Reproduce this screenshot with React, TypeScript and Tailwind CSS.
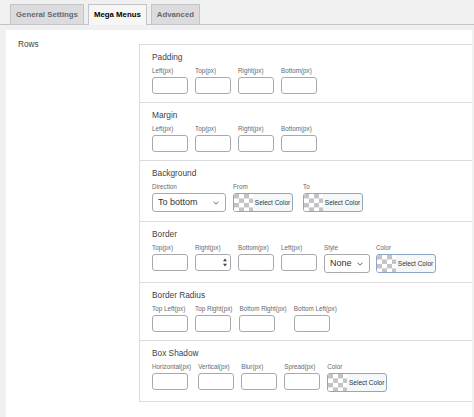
import React from "react";

function Checker() {
  return (
    <svg width="19" height="100%" viewBox="0 0 19 19" preserveAspectRatio="none" className="block h-full">
      <rect width="19" height="19" fill="#ffffff" />
      {[0, 1, 2, 3].map((r) =>
        [0, 1, 2, 3].map((c) =>
          (r + c) % 2 === 0 ? (
            <rect key={`${r}-${c}`} x={c * 5} y={r * 5} width="5" height="5" fill="#c3c4c7" />
          ) : null
        )
      )}
    </svg>
  );
}

function TextBox({ spinner = false }: { spinner?: boolean }) {
  return (
    <div className="relative w-[36px] h-[17px] border border-[#a7aaad] rounded-[3px] bg-white">
      {spinner && (
        <svg width="4" height="9" viewBox="0 0 4 9" className="absolute right-[3px] top-[3px]">
          <path d="M0 3.2 L2 0.6 L4 3.2 Z" fill="#3c434a" />
          <path d="M0 5.8 L2 8.4 L4 5.8 Z" fill="#3c434a" />
        </svg>
      )}
    </div>
  );
}

function SelectBox({ value, width }: { value: string; width: string }) {
  return (
    <div
      className={`${width} h-[19px] flex items-center justify-between pl-[5px] pr-[6px] border border-[#a7aaad] rounded-[3px] bg-white`}
    >
      <span className="text-[9px] leading-none text-[#2c3338]">{value}</span>
      <svg width="6" height="4" viewBox="0 0 6 4">
        <path d="M0.5 0.7 L3 3.2 L5.5 0.7" fill="none" stroke="#50575e" strokeWidth="0.9" />
      </svg>
    </div>
  );
}

function ColorButton() {
  return (
    <div className="w-[60px] h-[19px] shrink-0 flex border border-[#8fa7c4] rounded-[3px] bg-[#f6f7f7] overflow-hidden">
      <div className="w-[19px] shrink-0 h-full border-r border-[#c3c4c7]">
        <Checker />
      </div>
      <div className="flex-1 flex items-center justify-center text-[6.5px] text-[#2c3338]">Select Color</div>
    </div>
  );
}

function Field({ label, children, className = "" }: { label: string; children: React.ReactNode; className?: string }) {
  return (
    <div className={`flex flex-col shrink-0 ${className}`}>
      <span className="text-[6.3px] leading-[8px] text-[#646970] whitespace-nowrap">{label}</span>
      <div className="mt-[2px]">{children}</div>
    </div>
  );
}

function Section({
  title,
  tall = false,
  first = false,
  children,
}: {
  title: string;
  tall?: boolean;
  first?: boolean;
  children: React.ReactNode;
}) {
  return (
    <div className={`pl-[12px] pt-[7px] ${tall ? "pb-[9px]" : "pb-[8px]"} ${first ? "" : "border-t border-[#dcdcde]"}`}>
      <div className="text-[8.3px] leading-[10px] font-normal text-[#3c434a]">{title}</div>
      <div className="mt-[5px] flex items-start gap-[7px]">{children}</div>
    </div>
  );
}

function Tab({ label, active = false }: { label: string; active?: boolean }) {
  return (
    <div
      className={
        active
          ? "h-[21px] -mb-px px-[5px] flex items-center border border-b-0 border-[#c3c4c7] bg-[#f6f6f7] text-[7.8px] font-bold text-[#000]"
          : "h-[20px] px-[5px] flex items-center border border-b-0 border-[#c3c4c7] bg-[#dcdcde] text-[7.8px] font-bold text-[#646970]"
      }
    >
      {label}
    </div>
  );
}

export default function App() {
  return (
    <div className="min-h-screen bg-[#f0f0f1] font-['Liberation_Sans',Arial,sans-serif]">
      <div className="flex items-end gap-[4px] pl-[10px] pt-[4px] border-b border-[#c3c4c7]">
        <Tab label="General Settings" />
        <Tab label="Mega Menus" active />
        <Tab label="Advanced" />
      </div>

      <div className="ml-[6px] mr-[2px] mt-[5px] min-h-[387px] bg-white pl-[12px] pt-[9px] flex">
        <div className="w-[121px] shrink-0 text-[8.3px] leading-[10px] text-[#3c434a]">Rows</div>

        <div className="flex-1 mt-[5px] mb-[16px] border border-r-0 border-[#dcdcde]">
          <Section title="Padding" first>
            <Field label="Left(px)"><TextBox /></Field>
            <Field label="Top(px)"><TextBox /></Field>
            <Field label="Right(px)"><TextBox /></Field>
            <Field label="Bottom(px)"><TextBox /></Field>
          </Section>

          <Section title="Margin">
            <Field label="Left(px)"><TextBox /></Field>
            <Field label="Top(px)"><TextBox /></Field>
            <Field label="Right(px)"><TextBox /></Field>
            <Field label="Bottom(px)"><TextBox /></Field>
          </Section>

          <Section title="Background" tall>
            <Field label="Direction"><SelectBox value="To bottom" width="w-[74px]" /></Field>
            <Field label="From" className="mr-[3px]"><ColorButton /></Field>
            <Field label="To"><ColorButton /></Field>
          </Section>

          <Section title="Border" tall>
            <Field label="Top(px)"><TextBox /></Field>
            <Field label="Right(px)"><TextBox spinner /></Field>
            <Field label="Bottom(px)"><TextBox /></Field>
            <Field label="Left(px)"><TextBox /></Field>
            <Field label="Style" className="-mr-[1px]"><SelectBox value="None" width="w-[46px]" /></Field>
            <Field label="Color"><ColorButton /></Field>
          </Section>

          <Section title="Border Radius">
            <Field label="Top Left(px)"><TextBox /></Field>
            <Field label="Top Right(px)"><TextBox /></Field>
            <Field label="Bottom Right(px)"><TextBox /></Field>
            <Field label="Bottom Left(px)"><TextBox /></Field>
          </Section>

          <Section title="Box Shadow" tall>
            <Field label="Horizontal(px)"><TextBox /></Field>
            <Field label="Vertical(px)"><TextBox /></Field>
            <Field label="Blur(px)"><TextBox /></Field>
            <Field label="Spread(px)"><TextBox /></Field>
            <Field label="Color"><ColorButton /></Field>
          </Section>
        </div>
      </div>
    </div>
  );
}
